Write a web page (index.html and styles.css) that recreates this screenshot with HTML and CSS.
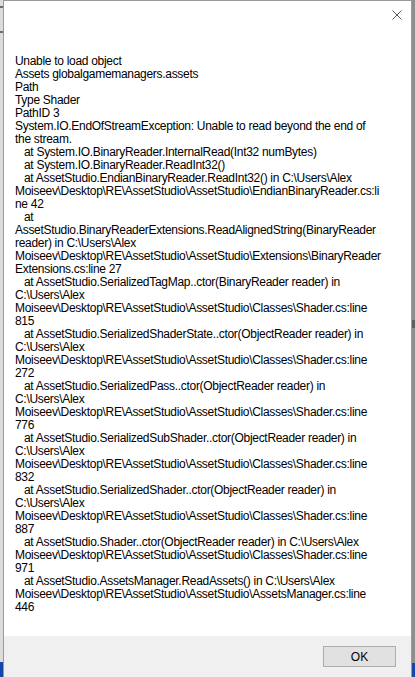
FILE: index.html
```html
<!DOCTYPE html>
<html lang="en">
<head>
  <meta charset="UTF-8" />
  <meta name="viewport" content="width=device-width, initial-scale=1" />
  <title>Error</title>
  <link rel="stylesheet" href="styles.css">
</head>
<body>

  <div class="strip strip-left"></div>

  <div class="dialog">
    <div class="titlebar">
      <span class="close">
        <svg width="10" height="10" viewBox="0 0 10 10" fill="none" stroke="#5a5a5a" stroke-width="1">
          <path d="M0.5 0.5 9.5 9.5"></path>
          <path d="M9.5 0.5 0.5 9.5"></path>
        </svg>
      </span>
    </div>

    <div class="message">
      <div>Unable to load object</div>
      <div>Assets globalgamemanagers.assets</div>
      <div>Path</div>
      <div>Type Shader</div>
      <div>PathID 3</div>
      <div>System.IO.EndOfStreamException: Unable to read beyond the end of</div>
      <div>the stream.</div>
      <div class="at">at System.IO.BinaryReader.InternalRead(Int32 numBytes)</div>
      <div class="at">at System.IO.BinaryReader.ReadInt32()</div>
      <div class="at">at AssetStudio.EndianBinaryReader.ReadInt32() in C:\Users\Alex</div>
      <div>Moiseev\Desktop\RE\AssetStudio\AssetStudio\EndianBinaryReader.cs:li</div>
      <div>ne 42</div>
      <div class="at">at</div>
      <div>AssetStudio.BinaryReaderExtensions.ReadAlignedString(BinaryReader</div>
      <div>reader) in C:\Users\Alex</div>
      <div>Moiseev\Desktop\RE\AssetStudio\AssetStudio\Extensions\BinaryReader</div>
      <div>Extensions.cs:line 27</div>
      <div class="at">at AssetStudio.SerializedTagMap..ctor(BinaryReader reader) in</div>
      <div>C:\Users\Alex</div>
      <div>Moiseev\Desktop\RE\AssetStudio\AssetStudio\Classes\Shader.cs:line</div>
      <div>815</div>
      <div class="at">at AssetStudio.SerializedShaderState..ctor(ObjectReader reader) in</div>
      <div>C:\Users\Alex</div>
      <div>Moiseev\Desktop\RE\AssetStudio\AssetStudio\Classes\Shader.cs:line</div>
      <div>272</div>
      <div class="at">at AssetStudio.SerializedPass..ctor(ObjectReader reader) in</div>
      <div>C:\Users\Alex</div>
      <div>Moiseev\Desktop\RE\AssetStudio\AssetStudio\Classes\Shader.cs:line</div>
      <div>776</div>
      <div class="at">at AssetStudio.SerializedSubShader..ctor(ObjectReader reader) in</div>
      <div>C:\Users\Alex</div>
      <div>Moiseev\Desktop\RE\AssetStudio\AssetStudio\Classes\Shader.cs:line</div>
      <div>832</div>
      <div class="at">at AssetStudio.SerializedShader..ctor(ObjectReader reader) in</div>
      <div>C:\Users\Alex</div>
      <div>Moiseev\Desktop\RE\AssetStudio\AssetStudio\Classes\Shader.cs:line</div>
      <div>887</div>
      <div class="at">at AssetStudio.Shader..ctor(ObjectReader reader) in C:\Users\Alex</div>
      <div>Moiseev\Desktop\RE\AssetStudio\AssetStudio\Classes\Shader.cs:line</div>
      <div>971</div>
      <div class="at">at AssetStudio.AssetsManager.ReadAssets() in C:\Users\Alex</div>
      <div>Moiseev\Desktop\RE\AssetStudio\AssetStudio\AssetsManager.cs:line</div>
      <div>446</div>
    </div>

    <div class="footer">
      <button class="button">OK</button>
    </div>
  </div>

  <div class="strip strip-right"></div>

</body>
</html>
```

FILE: styles.css
```css
* {
  margin: 0;
  padding: 0;
  box-sizing: border-box;
}
html, body {
  height: 100%;
}
body {
  display: flex;
  background: #e6e6e6;
  font-family: "Segoe UI", "Liberation Sans", sans-serif;
  font-size: 12px;
  color: #000;
  overflow: hidden;
}
.strip {
  width: 3px;
  flex-shrink: 0;
}
.strip-left {
  background:
    linear-gradient(to bottom,
      transparent 6px, #6f6f6f 6px, #6f6f6f 8px, transparent 8px,
      transparent 31px, #6f6f6f 31px, #6f6f6f 33px, transparent 33px,
      transparent 662px, #1846a8 662px),
    #dcdcdc;
}
.strip-right {
  background:
    linear-gradient(to bottom,
      transparent 320px, #5f5f5f 320px, #5f5f5f 328px, transparent 328px,
      transparent 663px, #1846a8 663px),
    #8e8e8e;
}
.dialog {
  flex: 1;
  display: flex;
  flex-direction: column;
  background: #fff;
  border: 1px solid #9a9a9a;
  border-bottom: none;
}
.titlebar {
  height: 54px;
  flex-shrink: 0;
  display: flex;
  justify-content: flex-end;
  align-items: flex-start;
  padding: 9px 9px 0 0;
}
.close svg {
  display: block;
}
.message {
  flex: 1;
  padding-left: 11px;
  line-height: 13px;
  letter-spacing: -0.3px;
}
.message div {
  white-space: pre;
}
.message .at {
  padding-left: 9px;
}
.footer {
  height: 41px;
  flex-shrink: 0;
  background: #f0f0f0;
  display: flex;
  justify-content: flex-end;
  align-items: flex-start;
  padding: 10px 15px 0 0;
}
.button {
  width: 73px;
  height: 21px;
  background: #e1e1e1;
  border: 1px solid #adadad;
  font-family: inherit;
  font-size: 12px;
  color: #000;
}
```
